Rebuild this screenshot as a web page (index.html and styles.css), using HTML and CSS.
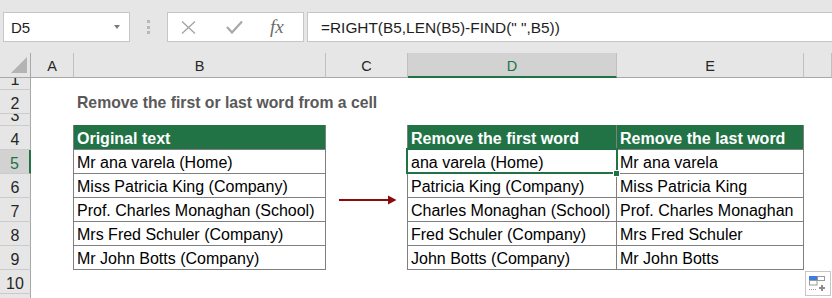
FILE: index.html
```html
<!DOCTYPE html>
<html>
<head>
<meta charset="utf-8">
<title>Remove the first or last word from a cell</title>
<link rel="stylesheet" href="styles.css">
</head>
<body>
<div class="formula-bar">
  <div class="namebox"><span class="ref">D5</span><span class="caret"></span></div>
  <div class="grip"><i></i><i></i><i></i></div>
  <div class="fxbox">
    <svg class="ic-x" width="15" height="13" viewBox="0 0 15 13"><path d="M1 0.5 L14 12.5 M14 0.5 L1 12.5" stroke="#a3a3a3" stroke-width="1.3" fill="none"/></svg>
    <svg class="ic-ok" width="17" height="14" viewBox="0 0 17 14"><path d="M1 7 L6 12.5 L16 1.5" stroke="#a8a8a8" stroke-width="2.2" fill="none"/></svg>
    <span class="fx">fx</span>
  </div>
  <div class="formula">=RIGHT(B5,LEN(B5)-FIND(" ",B5))</div>
</div>

<div class="sheet">
  <div class="corner"><svg width="16" height="16" viewBox="0 0 16 16"><polygon points="16,0 16,16 0,16" fill="#b4b4b4"/></svg></div>
  <div class="ch">A</div>
  <div class="ch">B</div>
  <div class="ch">C</div>
  <div class="ch selected">D</div>
  <div class="ch">E</div>
  <div class="ch"></div>

  <div class="rh short"><span>1</span></div>
  <div class="rh"><span>2</span></div>
  <div class="title">Remove the first or last word from a cell</div>
  <div class="rh short"><span>3</span></div>

  <div class="rh"><span>4</span></div>
  <div class="c th first colB">Original text</div>
  <div class="c th first colD">Remove the first word</div>
  <div class="c th colE">Remove the last word</div>

  <div class="rh active"><span>5</span></div>
  <div class="c first colB">Mr ana varela (Home)</div>
  <div class="c first colD active-cell">ana varela (Home)<span class="sel"></span><span class="handle"></span></div>
  <div class="c colE">Mr ana varela</div>

  <div class="rh"><span>6</span></div>
  <div class="c first colB">Miss Patricia King (Company)</div>
  <div class="c first colD">Patricia King (Company)</div>
  <div class="c colE">Miss Patricia King</div>

  <div class="rh"><span>7</span></div>
  <div class="c first colB">Prof. Charles Monaghan (School)</div>
  <div class="c first colD">Charles Monaghan (School)</div>
  <div class="c colE">Prof. Charles Monaghan</div>

  <div class="rh"><span>8</span></div>
  <div class="c first colB">Mrs Fred Schuler (Company)</div>
  <div class="c first colD">Fred Schuler (Company)</div>
  <div class="c colE">Mrs Fred Schuler</div>

  <div class="rh"><span>9</span></div>
  <div class="c first colB">Mr John Botts (Company)</div>
  <div class="c first colD">John Botts (Company)</div>
  <div class="c colE">Mr John Botts</div>

  <div class="rh"><span>10</span></div>
  <div class="rh last"></div>

  <svg class="arrow" width="58" height="10" viewBox="0 0 58 10">
    <rect x="0" y="4" width="51" height="2" fill="#8b0a0a"/>
    <polygon points="49,0.5 57.5,5 49,9.5" fill="#8b0a0a"/>
  </svg>

  <div class="qa">
    <svg width="24" height="23" viewBox="0 0 24 23">
      <rect x="3" y="4" width="8" height="4.5" fill="#3d7de0"/>
      <rect x="11.5" y="4.5" width="7" height="4" fill="none" stroke="#9a9a9a" stroke-width="1"/>
      <rect x="3.5" y="8.5" width="7.5" height="4.5" fill="none" stroke="#9a9a9a" stroke-width="1"/>
      <line x1="3" y1="17.5" x2="11" y2="17.5" stroke="#9a9a9a" stroke-width="1" stroke-dasharray="1 1"/>
      <rect x="13" y="15" width="6" height="2" fill="#8c8c8c"/>
      <rect x="15" y="13" width="2" height="6" fill="#8c8c8c"/>
    </svg>
  </div>
</div>
</body>
</html>
```

FILE: styles.css
```css
* {
  box-sizing: border-box;
}

html,
body {
  margin: 0;
  padding: 0;
}

body {
  width: 832px;
  height: 298px;
  overflow: hidden;
  background: #ffffff;
  color: #000000;
  font-family: "Liberation Sans", Arial, sans-serif;
}

/* ---------- formula bar ---------- */
.formula-bar {
  display: flex;
  height: 53px;
  padding-top: 12px;
  background: #e6e6e6;
}

.namebox {
  width: 127px;
  height: 30px;
  margin-left: 3px;
  display: flex;
  align-items: center;
  justify-content: space-between;
  padding: 0 9px 0 7px;
  background: #ffffff;
  border: 1px solid #c6c6c6;
}

.ref {
  font-size: 15px;
  line-height: 26px;
  padding-top: 2px;
  color: #1e1e1e;
}

.caret {
  width: 0;
  height: 0;
  border-left: 3.5px solid transparent;
  border-right: 3.5px solid transparent;
  border-top: 4px solid #7b7b7b;
}

.grip {
  width: 37px;
  display: flex;
  flex-direction: column;
  align-items: center;
  gap: 2.5px;
  padding-top: 8px;
}

.grip i {
  display: block;
  width: 3px;
  height: 3px;
  background: #b8b8b8;
}

.fxbox {
  width: 137px;
  height: 30px;
  display: flex;
  align-items: center;
  padding-left: 13px;
  background: #ffffff;
  border: 1px solid #c6c6c6;
}

.ic-x {
  margin-top: 1px;
}

.ic-ok {
  margin-left: 30px;
}

.fx {
  margin-left: 27px;
  font-family: "Liberation Serif", "Times New Roman", serif;
  font-style: italic;
  font-size: 19px;
  line-height: 26px;
  color: #6b6b6b;
}

.formula {
  flex: 1;
  height: 30px;
  margin-left: 3px;
  margin-right: -2px;
  padding: 2px 0 0 13px;
  background: #ffffff;
  border: 1px solid #c6c6c6;
  font-size: 15.4px;
  line-height: 26px;
  white-space: nowrap;
  color: #1e1e1e;
}

/* ---------- sheet grid ---------- */
.sheet {
  position: relative;
  height: 245px;
  display: grid;
  grid-template-columns: 31px 43px 252px 82px 209px 187px 1fr;
  grid-template-rows: 25px 12px 24px 12px repeat(7, 24px) 1fr;
  background: #ffffff;
}

.corner {
  grid-column: 1;
  display: flex;
  justify-content: flex-end;
  align-items: flex-end;
  padding: 0 3px 4px 0;
  background: #e6e6e6;
  border-right: 1px solid #a8a8a8;
  border-bottom: 1px solid #a8a8a8;
}

.ch {
  background: #e6e6e6;
  border-right: 1px solid #c0c0c0;
  border-bottom: 1px solid #a8a8a8;
  text-align: center;
  font-size: 14.5px;
  line-height: 22px;
  padding-top: 2px;
  color: #262626;
}

.ch.selected {
  background: #d2d2d2;
  border-bottom: 2px solid #217346;
  color: #217346;
}

.rh {
  grid-column: 1;
  display: flex;
  justify-content: center;
  align-items: flex-end;
  overflow: hidden;
  background: #e6e6e6;
  border-right: 1px solid #a8a8a8;
  border-bottom: 1px solid #cbcbcb;
  font-size: 16px;
  color: #262626;
}

.rh span {
  line-height: 24px;
  margin-bottom: -2.5px;
}

.rh.short span {
  line-height: 12px;
  margin-bottom: 3px;
}

.rh.last {
  border-bottom: 0;
}

.rh.active {
  background: #d2d2d2;
  border-right: 2px solid #217346;
  color: #217346;
}

.title {
  grid-column: 3 / span 4;
  padding: 2px 0 0 3px;
  font-size: 15.75px;
  font-weight: bold;
  line-height: 22px;
  color: #595959;
  white-space: nowrap;
}

.colB {
  grid-column: 3;
}

.colD {
  grid-column: 5;
}

.colE {
  grid-column: 6;
}

.c {
  padding: 2px 0 0 3px;
  font-size: 16px;
  line-height: 22px;
  white-space: nowrap;
  background: #ffffff;
  border-right: 1px solid #7f7f7f;
  border-bottom: 1px solid #7f7f7f;
}

.c.first {
  margin-left: -1px;
  border-left: 1px solid #7f7f7f;
}

.c.th {
  margin-top: -1px;
  padding-top: 3px;
  background: #217346;
  color: #ffffff;
  font-weight: bold;
}

.active-cell {
  position: relative;
}

.sel {
  position: absolute;
  left: -2px;
  top: -2px;
  width: 212px;
  height: 26px;
  border: 2px solid #217346;
}

.handle {
  position: absolute;
  left: 205px;
  top: 20px;
  width: 7px;
  height: 7px;
  background: #217346;
  border: 1px solid #ffffff;
}

.arrow {
  position: absolute;
  left: 339px;
  top: 142px;
}

.qa {
  position: absolute;
  left: 805px;
  top: 218px;
  width: 26px;
  height: 25px;
  background: #ffffff;
  border: 1px solid #c6c6c6;
}

.qa svg {
  display: block;
}
```
